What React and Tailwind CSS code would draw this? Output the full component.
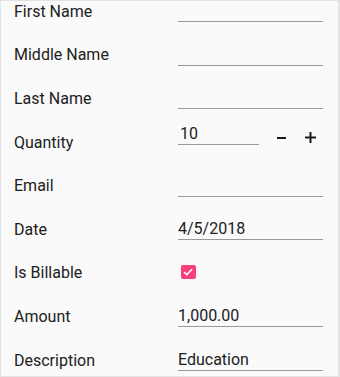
import { useState } from 'react';

const font = { fontFamily: 'Roboto, "Noto Sans", sans-serif' };

function TextField({ value }) {
  return (
    <div className="w-[145px] h-[21px] border-b border-[#999999] text-[16px] leading-[20px] text-[#212121] whitespace-nowrap overflow-hidden">
      {value}
    </div>
  );
}

function Row({ label, children }) {
  return (
    <div className="flex items-center h-[43.6px] shrink-0">
      <div className="w-[177px] pl-[13px] text-[16px] leading-5 text-[#212121]">{label}</div>
      {children}
    </div>
  );
}

export default function App() {
  const [qty, setQty] = useState(10);
  const [billable, setBillable] = useState(true);

  return (
    <div
      className="w-[340px] h-[377px] overflow-hidden bg-[#fafafa] border-t border-l border-b border-r-2 border-[#e3e3e3]"
      style={font}
    >
      <div className="flex flex-col mt-[-11px]">
        <Row label="First Name"><TextField value="" /></Row>
        <Row label="Middle Name"><TextField value="" /></Row>
        <Row label="Last Name"><TextField value="" /></Row>
        <Row label="Quantity">
          <div className="w-[81px] h-[21px] mb-[17px] pl-[2px] border-b border-[#999999] text-[16px] leading-[20px] text-[#212121]">
            {qty}
          </div>
          <button
            className="ml-[17px] mb-[10px] w-[10px] h-[12px] flex items-center justify-center"
            onClick={() => setQty(qty - 1)}
          >
            <svg width="9" height="2" viewBox="0 0 9 2">
              <rect width="9" height="2" fill="#1a1a1a" />
            </svg>
          </button>
          <button
            className="ml-[18px] mb-[10px] w-[12px] h-[12px] flex items-center justify-center"
            onClick={() => setQty(qty + 1)}
          >
            <svg width="11" height="11" viewBox="0 0 11 11">
              <rect x="0" y="4.5" width="11" height="2" fill="#1a1a1a" />
              <rect x="4.5" y="0" width="2" height="11" fill="#1a1a1a" />
            </svg>
          </button>
        </Row>
        <Row label="Email"><TextField value="" /></Row>
        <Row label="Date"><TextField value="4/5/2018" /></Row>
        <Row label="Is Billable">
          <button
            className="ml-[3px] mb-[3px] w-[14.5px] h-[14.5px] rounded-[2px] bg-[#fa3f7a] flex items-center justify-center"
            onClick={() => setBillable(!billable)}
          >
            {billable && (
              <svg width="10" height="8" viewBox="0 0 10 8">
                <path d="M1 4 L3.8 6.6 L9 1.3" fill="none" stroke="#fff" strokeWidth="1.6" />
              </svg>
            )}
          </button>
        </Row>
        <Row label="Amount"><TextField value="1,000.00" /></Row>
        <Row label="Description"><TextField value="Education" /></Row>
      </div>
    </div>
  );
}
